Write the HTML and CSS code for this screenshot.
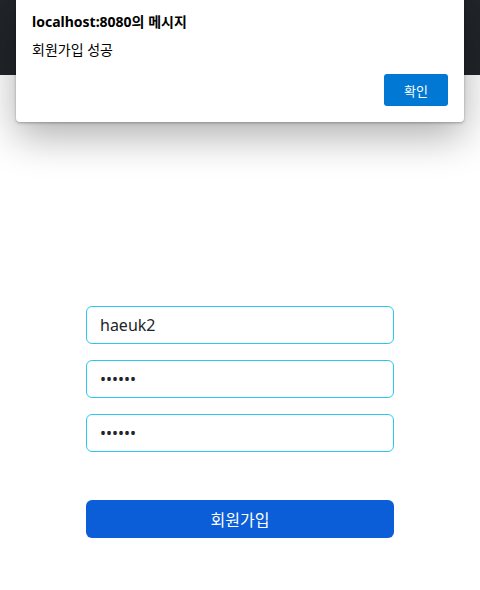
FILE: index.html
```html
<!DOCTYPE html>
<html>
<head>
    <title>회원가입</title>
    <meta charset="UTF-8">
    <link rel="stylesheet" href="styles.css">
</head>
<body>
    <div class="navbar"></div>

    <div class="page">
        <form class="signup-form">
            <input class="form-control" type="text" value="haeuk2">
            <input class="form-control" type="password" value="123456">
            <input class="form-control" type="password" value="123456">
            <button class="btn-primary" type="button">회원가입</button>
        </form>
    </div>

    <div class="alert-dialog">
        <div class="alert-title">localhost:8080의 메시지</div>
        <div class="alert-message">회원가입 성공</div>
        <div class="alert-actions">
            <button class="alert-ok" type="button">확인</button>
        </div>
    </div>
</body>
</html>
```

FILE: styles.css
```css
body {
    margin: 0;
    font-family: "Segoe UI", "Noto Sans", "Noto Sans CJK KR", sans-serif;
    color: #212529;
    background: #fff;
}
.navbar {
    height: 75px;
    background: #212529;
}
.page {
    display: flex;
    justify-content: center;
    padding-top: 231px;
}
.signup-form {
    width: 308px;
    display: flex;
    flex-direction: column;
    gap: 16px;
}
.form-control {
    box-sizing: border-box;
    height: 38px;
    padding: 6px 13px;
    font-family: inherit;
    font-size: 16px;
    color: #212529;
    border: 1px solid #29c8f0;
    border-radius: 6px;
    outline: none;
}
.btn-primary {
    height: 38px;
    margin-top: 32px;
    background: #0b5ed7;
    color: #fff;
    border: none;
    border-radius: 6px;
    font-family: inherit;
    font-size: 16px;
}
.alert-dialog {
    position: absolute;
    top: 0;
    left: 16px;
    width: 448px;
    height: 122px;
    box-sizing: border-box;
    padding: 12px 16px 16px;
    background: #fff;
    border-radius: 0 0 4px 4px;
    box-shadow: 0 14px 40px rgba(0, 0, 0, 0.32), 0 1px 3px rgba(0, 0, 0, 0.3);
    display: flex;
    flex-direction: column;
}
.alert-title {
    font-size: 14px;
    font-weight: bold;
    line-height: 20px;
    color: #000;
}
.alert-message {
    margin-top: 8px;
    font-size: 14px;
    line-height: 20px;
    color: #000;
}
.alert-actions {
    margin-top: auto;
    display: flex;
    justify-content: flex-end;
}
.alert-ok {
    width: 64px;
    height: 32px;
    background: #0078d4;
    color: #fff;
    border: none;
    border-radius: 3px;
    font-family: inherit;
    font-size: 13px;
}
```
